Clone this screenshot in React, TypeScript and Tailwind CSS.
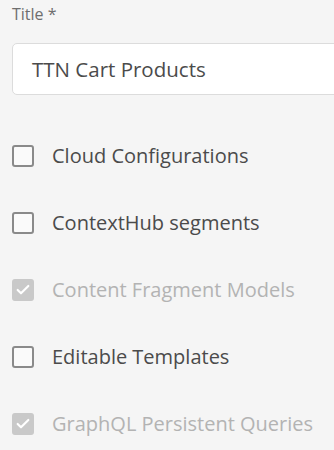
import { Check } from 'lucide-react';

type Item = { label: string; checked?: boolean; disabled?: boolean };

const items: Item[] = [
  { label: 'Cloud Configurations' },
  { label: 'ContextHub segments' },
  { label: 'Content Fragment Models', checked: true, disabled: true },
  { label: 'Editable Templates' },
  { label: 'GraphQL Persistent Queries', checked: true, disabled: true },
];

function Box({ checked, disabled }: { checked?: boolean; disabled?: boolean }) {
  if (checked && disabled) {
    return (
      <span className="flex h-[22px] w-[22px] shrink-0 items-center justify-center rounded-[3px] bg-[#c9c9c9]">
        <Check className="h-[16px] w-[16px] text-white" strokeWidth={3.2} />
      </span>
    );
  }
  return <span className="h-[22px] w-[22px] shrink-0 rounded-[3px] border-2 border-[#8a8a8a] bg-[#fafafa]" />;
}

export default function App() {
  return (
    <div className="h-[450px] w-[334px] overflow-hidden bg-[#f5f5f5] font-['Open_Sans',sans-serif]">
      <div className="pl-[12px] pt-[3px]">
        <div className="text-[16px] leading-[22px] text-[#6e6e6e]">Title *</div>
        <div className="mt-[18px] flex h-[52px] w-[340px] items-center rounded-[5px] border border-[#dcdcdc] bg-white pl-[19px] text-[20.5px] text-[#4b4b4b]">
          TTN Cart Products
        </div>
        <div className="mt-[50px] flex flex-col gap-[45px]">
          {items.map((it) => (
            <div key={it.label} className="flex h-[22px] items-center gap-[18px]">
              <Box checked={it.checked} disabled={it.disabled} />
              <span className={`text-[20px] ${it.disabled ? 'text-[#b3b3b3]' : 'text-[#4b4b4b]'}`}>
                {it.label}
              </span>
            </div>
          ))}
        </div>
      </div>
    </div>
  );
}
